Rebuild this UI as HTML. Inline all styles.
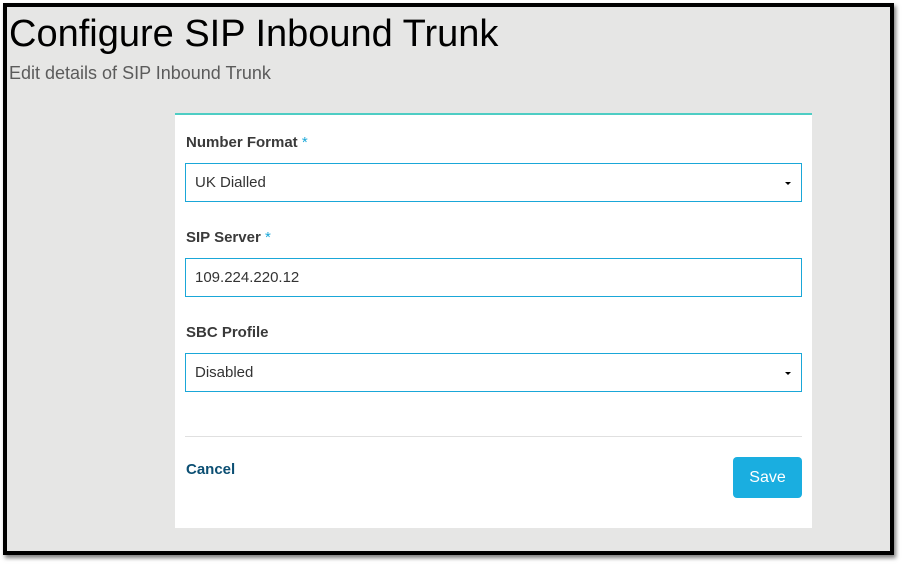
<!DOCTYPE html>
<html><head><style>
html,body{margin:0;padding:0;width:903px;height:565px;background:#fff;overflow:hidden;font-family:"Liberation Sans",sans-serif}
.frame{position:absolute;left:3px;top:3px;width:883px;height:544px;border:4px solid #000;background:#e6e6e5;box-shadow:2px 3px 4px rgba(0,0,0,.5)}
h1{position:absolute;left:2px;top:6px;margin:0;font-weight:normal;font-size:38px;color:#000;line-height:42px}
.sub{position:absolute;left:2px;top:56px;font-size:18px;color:#5b5b5b}
.card{position:absolute;left:168px;top:106px;width:637px;height:413px;background:#fff;border-top:2px solid #4ecdc4}
.lbl{position:absolute;left:11px;font-weight:bold;font-size:15px;color:#3a3a3a}
.lbl span{color:#1aa7d8;font-weight:normal}
.inp{position:absolute;left:10px;border:1px solid #1aa7d8;font-size:15px;color:#333;line-height:37px;padding-left:9px;box-sizing:border-box;width:617px;height:39px}
.caret{position:absolute;right:10px;top:18px;width:0;height:0;border-left:3px solid transparent;border-right:3px solid transparent;border-top:3px solid #000}
.hr{position:absolute;left:10px;width:617px;top:321px;height:1px;background:#e0e0e0}
.cancel{position:absolute;left:11px;top:346px;font-weight:bold;font-size:15px;color:#0c4f73}
.save{position:absolute;left:558px;top:342px;width:69px;height:41px;background:#1aaee0;border-radius:4px;color:#fff;font-size:16px;text-align:center;line-height:41px}
</style></head><body>
<div class="frame">
<h1>Configure SIP Inbound Trunk</h1>
<div class="sub">Edit details of SIP Inbound Trunk</div>
<div class="card">
<div class="lbl" style="top:19px">Number Format <span>*</span></div>
<div class="inp" style="top:48px">UK Dialled<div class="caret"></div></div>
<div class="lbl" style="top:114px">SIP Server <span>*</span></div>
<div class="inp" style="top:143px">109.224.220.12</div>
<div class="lbl" style="top:209px">SBC Profile</div>
<div class="inp" style="top:238px">Disabled<div class="caret"></div></div>
<div class="hr"></div>
<div class="cancel">Cancel</div>
<div class="save">Save</div>
</div>
</div>
</body></html>
